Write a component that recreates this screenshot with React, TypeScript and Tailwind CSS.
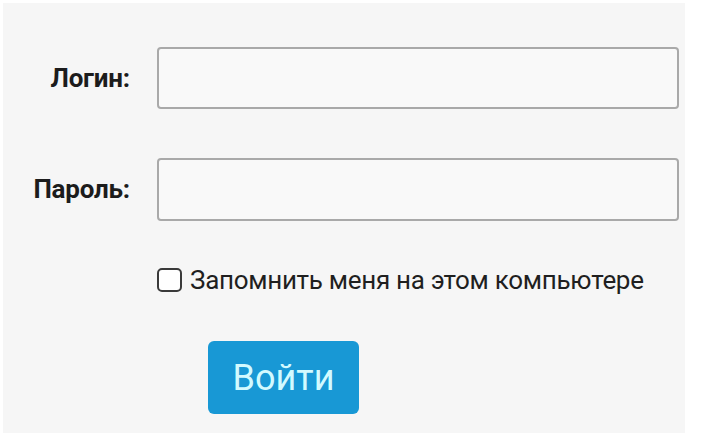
export default function App() {
  return (
    <div className="min-h-screen bg-white p-[3px] font-['Roboto',sans-serif]">
      <div className="w-[682px] h-[430px] bg-[#f6f6f6] pt-[44px]">
        <div className="grid grid-cols-[127px_522px] gap-x-[27px] gap-y-[49px] items-center">
          <label className="text-right text-[26px] font-bold text-[#1c1c1c] tracking-[-0.2px]">Логин:</label>
          <input
            type="text"
            className="h-[62px] rounded-[4px] border-2 border-[#a9a9a9] bg-[#f9f9f9] px-3 outline-none"
          />
          <label className="text-right text-[26px] font-bold text-[#1c1c1c] tracking-[-0.2px]">Пароль:</label>
          <input
            type="password"
            className="h-[63px] rounded-[4px] border-2 border-[#a9a9a9] bg-[#f9f9f9] px-3 outline-none"
          />
        </div>

        <div className="ml-[154px] mt-[46px] flex items-center gap-[8px] h-[25px]">
          <span className="flex-none w-[25px] h-[24px] rounded-[5px] border-2 border-[#3a3a3a] bg-white" />
          <span className="whitespace-nowrap text-[26px] leading-none text-[#1f1f1f] tracking-[-0.3px]">
            Запомнить меня на этом компьютере
          </span>
        </div>

        <button className="ml-[205px] mt-[49px] w-[151px] h-[73px] rounded-[6px] bg-[#1898d5] text-[36px] text-[#d2faff] leading-none">
          Войти
        </button>
      </div>
    </div>
  );
}
